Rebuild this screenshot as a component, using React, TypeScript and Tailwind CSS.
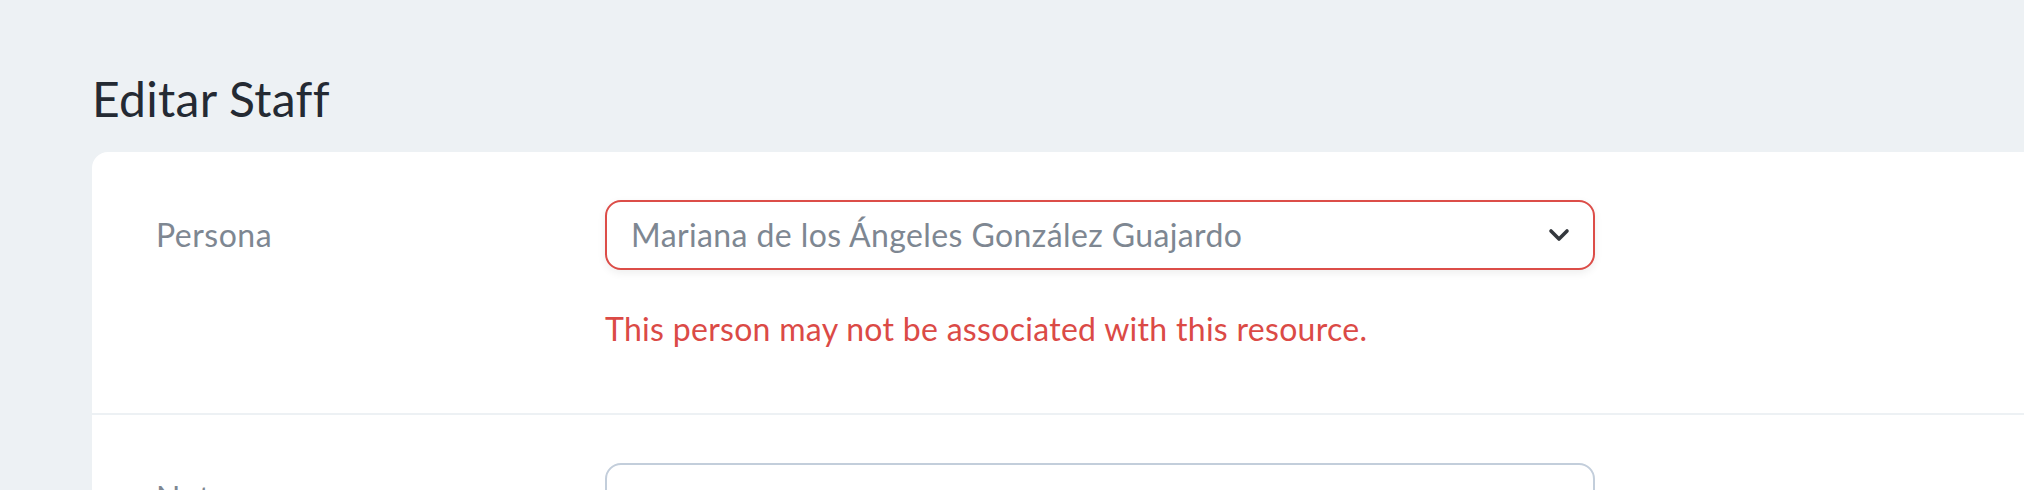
import React from "react";

export default function App() {
  return (
    <div
      className="w-[2024px] h-[490px] overflow-hidden bg-[#edf1f4]"
      style={{ fontFamily: "Lato, 'Noto Sans', sans-serif" }}
    >
      <div className="pl-[92px] pt-[70px]">
        <h1 className="text-[48px] leading-[58px] text-[#242a33] font-normal tracking-[0.3px]">
          Editar Staff
        </h1>
        <div className="mt-[24px] w-[2000px] bg-white rounded-[16px]">
          <div className="flex px-[64px] pt-[48px] pb-[60px] border-b-2 border-[#edf1f4]">
            <div className="w-[449px] h-[70px] flex items-center text-[32px] tracking-[0.5px] text-[#7e8792]">
              Persona
            </div>
            <div className="w-[990px]">
              <div className="h-[70px] flex items-center justify-between border-2 border-[#dc4d48] rounded-[16px] pl-[24px] pr-[23px] bg-white shadow-[0_3px_8px_rgba(0,0,0,0.07)]">
                <span className="text-[32px] tracking-[0.4px] text-[#7e8792]">
                  Mariana de los Ángeles González Guajardo
                </span>
                <svg width="22" height="14" viewBox="0 0 22 14" fill="none">
                  <polyline
                    points="3,3 11,11 19,3"
                    stroke="#34383d"
                    strokeWidth="3.6"
                    strokeLinecap="round"
                    strokeLinejoin="round"
                  />
                </svg>
              </div>
              <p className="mt-[35px] text-[32px] leading-[48px] tracking-[0.3px] text-[#db4a46]">
                This person may not be associated with this resource.
              </p>
            </div>
          </div>
          <div className="flex px-[64px] pt-[48px] pb-[48px]">
            <div className="w-[449px] h-[70px] flex items-center text-[32px] tracking-[0.5px] text-[#7e8792]">
              Notas
            </div>
            <div className="w-[990px]">
              <div className="h-[140px] border-2 border-[#c3cedb] rounded-[16px] bg-white" />
            </div>
          </div>
        </div>
      </div>
    </div>
  );
}
